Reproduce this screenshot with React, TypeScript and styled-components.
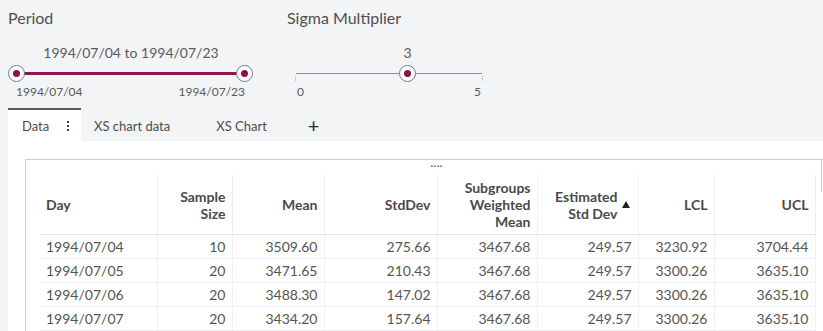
import React, { FC } from 'react';
import styled, { createGlobalStyle } from 'styled-components';

const GlobalStyle = createGlobalStyle`
  html, body {
    margin: 0;
    padding: 0;
    background: #f3f4f6;
    overflow: hidden;
  }
  body {
    font-family: Lato, "Open Sans", sans-serif;
    color: #4d4d4d;
  }
`;

type Row = {
  day: string;
  size: number;
  mean: string;
  std: string;
  weighted: string;
  est: string;
  lcl: string;
  ucl: string;
};

const rows: Row[] = [
  { day: '1994/07/04', size: 10, mean: '3509.60', std: '275.66', weighted: '3467.68', est: '249.57', lcl: '3230.92', ucl: '3704.44' },
  { day: '1994/07/05', size: 20, mean: '3471.65', std: '210.43', weighted: '3467.68', est: '249.57', lcl: '3300.26', ucl: '3635.10' },
  { day: '1994/07/06', size: 20, mean: '3488.30', std: '147.02', weighted: '3467.68', est: '249.57', lcl: '3300.26', ucl: '3635.10' },
  { day: '1994/07/07', size: 20, mean: '3434.20', std: '157.64', weighted: '3467.68', est: '249.57', lcl: '3300.26', ucl: '3635.10' },
];

const colWidths = [117, 75, 92, 113, 100, 101, 76, 101];

type SliderProps = {
  width: number;
  min: string;
  max: string;
  value: string;
  from: number; // 0..1
  to: number; // 0..1
  range?: boolean;
};

const Slider: FC<SliderProps> = ({ width, min, max, value, from, to, range }) => {
  const labelPos = range ? (from + to) / 2 : to;
  return (
    <SliderBox $width={width}>
      <ValueRow>
        <ValueText style={{ left: `${labelPos * 100}%` }}>{value}</ValueText>
      </ValueRow>
      <TrackArea>
        <Track $range={range} />
        {!range && <Tick $side="left" />}
        {!range && <Tick $side="right" />}
        {range && (
          <Fill style={{ left: `${from * 100}%`, width: `${(to - from) * 100}%` }} />
        )}
        {range && (
          <Thumb style={{ left: `${from * 100}%` }}>
            <Dot />
          </Thumb>
        )}
        <Thumb style={{ left: `${to * 100}%` }}>
          <Dot />
        </Thumb>
      </TrackArea>
      <EndLabels $small={!range}>
        <span>{min}</span>
        <span>{max}</span>
      </EndLabels>
    </SliderBox>
  );
};

const App: FC = () => {
  return (
    <>
      <GlobalStyle />
      <Page>
        <Controls>
          <ControlGroup $width={279}>
            <GroupLabel>Period</GroupLabel>
            <Slider
              width={228}
              min="1994/07/04"
              max="1994/07/23"
              value="1994/07/04 to 1994/07/23"
              from={0}
              to={1}
              range
            />
          </ControlGroup>
          <ControlGroup $width={220}>
            <GroupLabel>Sigma Multiplier</GroupLabel>
            <Slider width={186} min="0" max="5" value="3" from={0} to={0.6} />
          </ControlGroup>
        </Controls>

        <TabBar>
          <Tab $active>
            <span>Data</span>
            <Kebab>
              <i />
              <i />
              <i />
            </Kebab>
          </Tab>
          <Tab>XS chart data</Tab>
          <Tab>XS Chart</Tab>
          <AddTab>+</AddTab>
        </TabBar>

        <Panel>
          <TableFrame>
            <Grip>····</Grip>
            <ScrollThumb />
            <TableInset>
              <Table>
                <colgroup>
                  {colWidths.map((w, i) => (
                    <col key={i} style={{ width: w }} />
                  ))}
                </colgroup>
                <thead>
                  <tr>
                    <Th $left>Day</Th>
                    <Th>
                      Sample
                      <br />
                      Size
                    </Th>
                    <Th>Mean</Th>
                    <Th>StdDev</Th>
                    <Th>
                      Subgroups
                      <br />
                      Weighted
                      <br />
                      Mean
                    </Th>
                    <Th>
                      <SortHead>
                        <span>
                          Estimated
                          <br />
                          Std Dev
                        </span>
                        <SortArrow />
                      </SortHead>
                    </Th>
                    <Th>LCL</Th>
                    <Th>UCL</Th>
                  </tr>
                </thead>
                <tbody>
                  {rows.map((r) => (
                    <tr key={r.day}>
                      <Td $left>{r.day}</Td>
                      <Td>{r.size}</Td>
                      <Td>{r.mean}</Td>
                      <Td>{r.std}</Td>
                      <Td>{r.weighted}</Td>
                      <Td>{r.est}</Td>
                      <Td>{r.lcl}</Td>
                      <Td>{r.ucl}</Td>
                    </tr>
                  ))}
                </tbody>
              </Table>
            </TableInset>
          </TableFrame>
        </Panel>
      </Page>
    </>
  );
};

export default App;

const Page = styled.div`
  width: 823px;
  height: 331px;
  display: flex;
  flex-direction: column;
  overflow: hidden;
`;

const Controls = styled.div`
  display: flex;
  padding: 8px 0 0 8px;
`;

const ControlGroup = styled.div<{ $width: number }>`
  width: ${(p) => p.$width}px;
  display: flex;
  flex-direction: column;
`;

const GroupLabel = styled.div`
  font-size: 16px;
  line-height: 20px;
  color: #4f4f4f;
  margin-bottom: 16px;
`;

const SliderBox = styled.div<{ $width: number }>`
  width: ${(p) => p.$width}px;
  margin-left: 9px;
  display: flex;
  flex-direction: column;
`;

const ValueRow = styled.div`
  position: relative;
  height: 18px;
`;

const ValueText = styled.span`
  position: absolute;
  top: 0;
  transform: translateX(-50%);
  white-space: nowrap;
  font-size: 14px;
  line-height: 18px;
  color: #5a5a5a;
`;

const TrackArea = styled.div`
  position: relative;
  height: 20px;
  margin-top: 2px;
`;

const Track = styled.div<{ $range?: boolean }>`
  position: absolute;
  left: 0;
  right: 0;
  top: 9px;
  height: 1px;
  background: ${(p) => (p.$range ? 'transparent' : '#8c9199')};
`;

const Tick = styled.div<{ $side: 'left' | 'right' }>`
  position: absolute;
  ${(p) => (p.$side === 'left' ? 'left: -1px;' : 'right: -1px;')}
  top: 12px;
  width: 1px;
  height: 5px;
  background: #c4c8ce;
`;

const Fill = styled.div`
  position: absolute;
  top: 8px;
  height: 3px;
  background: #8b1650;
`;

const Thumb = styled.div`
  position: absolute;
  top: 1px;
  width: 15px;
  height: 15px;
  margin-left: -9px;
  border: 1.5px solid #737a84;
  border-radius: 50%;
  background: #ffffff;
  display: flex;
  align-items: center;
  justify-content: center;
`;

const Dot = styled.div`
  width: 7px;
  height: 7px;
  border-radius: 50%;
  background: #8b1347;
`;

const EndLabels = styled.div<{ $small?: boolean }>`
  display: flex;
  justify-content: space-between;
  margin: 0 ${(p) => (p.$small ? '1px' : '0')} 0 ${(p) => (p.$small ? '1px' : '-1px')};
  font-size: 12px;
  line-height: 16px;
  color: #5a5a5a;
`;

const TabBar = styled.div`
  display: flex;
  align-items: stretch;
  height: 33px;
  margin: 8px 0 0 8px;
`;

const Tab = styled.div<{ $active?: boolean }>`
  display: flex;
  align-items: center;
  justify-content: space-between;
  box-sizing: border-box;
  font-size: 13px;
  color: #4d4d4d;
  padding: ${(p) => (p.$active ? '0 12px 0 14px' : '0 13px')};
  width: ${(p) => (p.$active ? '73px' : 'auto')};
  margin-right: ${(p) => (p.$active ? '0' : '20px')};
  background: ${(p) => (p.$active ? '#ffffff' : 'transparent')};
  border-top: 2px solid ${(p) => (p.$active ? '#555a60' : 'transparent')};
`;

const Kebab = styled.span`
  display: flex;
  flex-direction: column;
  gap: 2px;

  i {
    display: block;
    width: 2px;
    height: 2px;
    background: #3a3a5a;
  }
`;

const AddTab = styled.div`
  display: flex;
  align-items: center;
  padding: 0 8px;
  font-size: 20px;
  color: #2a2a2a;
`;

const Panel = styled.div`
  flex: 1;
  margin-left: 8px;
  background: #ffffff;
  padding: 18px 0 0 17px;
`;

const TableFrame = styled.div`
  position: relative;
  width: 822px;
  height: 100%;
  box-sizing: border-box;
  border-top: 1px solid #c8cdd4;
  border-left: 1px solid #c8cdd4;
`;

const Grip = styled.div`
  height: 15px;
  line-height: 12px;
  text-align: center;
  font-size: 12px;
  color: #6a6a6a;
`;

const ScrollThumb = styled.div`
  position: absolute;
  left: 795px;
  top: 0;
  width: 12px;
  height: 32px;
  border-left: 1px solid #c8cdd4;
`;

const TableInset = styled.div`
  padding-left: 14px;
`;

const Table = styled.table`
  table-layout: fixed;
  border-collapse: collapse;
  width: 775px;
`;

const Th = styled.th<{ $left?: boolean }>`
  height: 59px;
  padding: 0 6px;
  text-align: ${(p) => (p.$left ? 'left' : 'right')};
  vertical-align: middle;
  font-size: 14px;
  line-height: 17px;
  font-weight: 700;
  color: #4a4a4a;
  border-right: 1px solid #eceef1;
  border-bottom: 1px solid #e3e6ea;
`;

const SortHead = styled.div`
  display: flex;
  justify-content: flex-end;
  align-items: center;
  gap: 4px;
  margin-right: 2px;
`;

const SortArrow = styled.span`
  width: 0;
  height: 0;
  border-left: 4px solid transparent;
  border-right: 4px solid transparent;
  border-bottom: 7px solid #222;
`;

const Td = styled.td<{ $left?: boolean }>`
  height: 23px;
  padding: 0 6px;
  text-align: ${(p) => (p.$left ? 'left' : 'right')};
  font-size: 14px;
  line-height: 17px;
  color: #555;
  white-space: nowrap;
  border-right: 1px solid #eef0f2;
  border-bottom: 1px solid #eceef1;
`;
